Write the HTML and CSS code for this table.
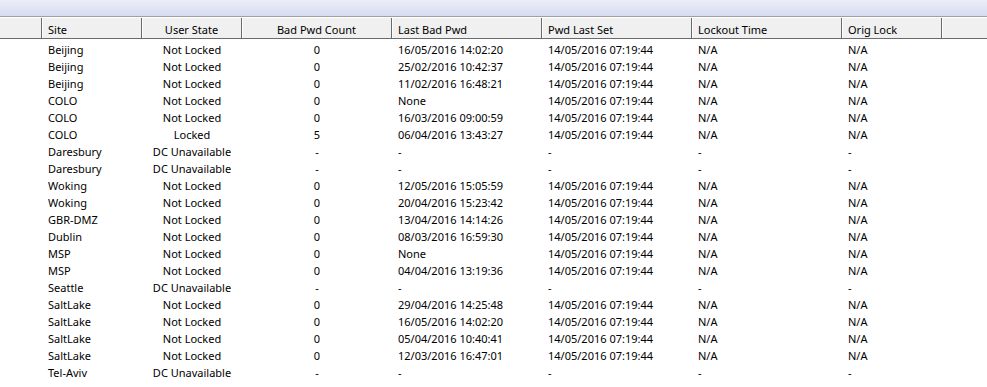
FILE: index.html
```html
<!DOCTYPE html>
<html>
<head>
<meta charset="utf-8">
<link rel="stylesheet" href="styles.css">
</head>
<body>
<div class="topbar"></div>
<div class="grid head">
  <div class="h"></div>
  <div class="h">Site</div>
  <div class="h c">User State</div>
  <div class="h c">Bad Pwd Count</div>
  <div class="h">Last Bad Pwd</div>
  <div class="h">Pwd Last Set</div>
  <div class="h">Lockout Time</div>
  <div class="h">Orig Lock</div>
  <div class="h"></div>
</div>
<div class="rows" id="rows">
  <div class="grid row"><span></span><span>Beijing</span><span class="c">Not Locked</span><span class="c">0</span><span>16/05/2016 14:02:20</span><span>14/05/2016 07:19:44</span><span>N/A</span><span>N/A</span></div>
  <div class="grid row"><span></span><span>Beijing</span><span class="c">Not Locked</span><span class="c">0</span><span>25/02/2016 10:42:37</span><span>14/05/2016 07:19:44</span><span>N/A</span><span>N/A</span></div>
  <div class="grid row"><span></span><span>Beijing</span><span class="c">Not Locked</span><span class="c">0</span><span>11/02/2016 16:48:21</span><span>14/05/2016 07:19:44</span><span>N/A</span><span>N/A</span></div>
  <div class="grid row"><span></span><span>COLO</span><span class="c">Not Locked</span><span class="c">0</span><span>None</span><span>14/05/2016 07:19:44</span><span>N/A</span><span>N/A</span></div>
  <div class="grid row"><span></span><span>COLO</span><span class="c">Not Locked</span><span class="c">0</span><span>16/03/2016 09:00:59</span><span>14/05/2016 07:19:44</span><span>N/A</span><span>N/A</span></div>
  <div class="grid row"><span></span><span>COLO</span><span class="c">Locked</span><span class="c">5</span><span>06/04/2016 13:43:27</span><span>14/05/2016 07:19:44</span><span>N/A</span><span>N/A</span></div>
  <div class="grid row"><span></span><span>Daresbury</span><span class="c">DC Unavailable</span><span class="c">-</span><span>-</span><span>-</span><span>-</span><span>-</span></div>
  <div class="grid row"><span></span><span>Daresbury</span><span class="c">DC Unavailable</span><span class="c">-</span><span>-</span><span>-</span><span>-</span><span>-</span></div>
  <div class="grid row"><span></span><span>Woking</span><span class="c">Not Locked</span><span class="c">0</span><span>12/05/2016 15:05:59</span><span>14/05/2016 07:19:44</span><span>N/A</span><span>N/A</span></div>
  <div class="grid row"><span></span><span>Woking</span><span class="c">Not Locked</span><span class="c">0</span><span>20/04/2016 15:23:42</span><span>14/05/2016 07:19:44</span><span>N/A</span><span>N/A</span></div>
  <div class="grid row"><span></span><span>GBR-DMZ</span><span class="c">Not Locked</span><span class="c">0</span><span>13/04/2016 14:14:26</span><span>14/05/2016 07:19:44</span><span>N/A</span><span>N/A</span></div>
  <div class="grid row"><span></span><span>Dublin</span><span class="c">Not Locked</span><span class="c">0</span><span>08/03/2016 16:59:30</span><span>14/05/2016 07:19:44</span><span>N/A</span><span>N/A</span></div>
  <div class="grid row"><span></span><span>MSP</span><span class="c">Not Locked</span><span class="c">0</span><span>None</span><span>14/05/2016 07:19:44</span><span>N/A</span><span>N/A</span></div>
  <div class="grid row"><span></span><span>MSP</span><span class="c">Not Locked</span><span class="c">0</span><span>04/04/2016 13:19:36</span><span>14/05/2016 07:19:44</span><span>N/A</span><span>N/A</span></div>
  <div class="grid row"><span></span><span>Seattle</span><span class="c">DC Unavailable</span><span class="c">-</span><span>-</span><span>-</span><span>-</span><span>-</span></div>
  <div class="grid row"><span></span><span>SaltLake</span><span class="c">Not Locked</span><span class="c">0</span><span>29/04/2016 14:25:48</span><span>14/05/2016 07:19:44</span><span>N/A</span><span>N/A</span></div>
  <div class="grid row"><span></span><span>SaltLake</span><span class="c">Not Locked</span><span class="c">0</span><span>16/05/2016 14:02:20</span><span>14/05/2016 07:19:44</span><span>N/A</span><span>N/A</span></div>
  <div class="grid row"><span></span><span>SaltLake</span><span class="c">Not Locked</span><span class="c">0</span><span>05/04/2016 10:40:41</span><span>14/05/2016 07:19:44</span><span>N/A</span><span>N/A</span></div>
  <div class="grid row"><span></span><span>SaltLake</span><span class="c">Not Locked</span><span class="c">0</span><span>12/03/2016 16:47:01</span><span>14/05/2016 07:19:44</span><span>N/A</span><span>N/A</span></div>
  <div class="grid row"><span></span><span>Tel-Aviv</span><span class="c">DC Unavailable</span><span class="c">-</span><span>-</span><span>-</span><span>-</span><span>-</span></div>
</div>
</body>
</html>
```
FILE: styles.css
```css
html, body {
  margin: 0;
  padding: 0;
  background: #ffffff;
  overflow: hidden;
}
body {
  font-family: "Noto Sans", "Open Sans", sans-serif;
  font-size: 11px;
  color: #000;
  width: 987px;
  height: 387px;
}
.topbar {
  height: 16px;
  background: linear-gradient(#eceef8, #d6dcef);
  border-bottom: 1px solid #a0a0a0;
}
.grid {
  display: grid;
  grid-template-columns: 42px 100px 100px 150px 150px 150px 150px 100px 1fr;
}
.head {
  border-top: 1px solid #ffffff;
  background: #f0f0f0;
  height: 20px;
  border-bottom: 1px solid #6b6b6b;
}
.h {
  border-right: 1px solid #6b6b6b;
  box-shadow: inset 1px 0 0 #ffffff;
  padding-left: 6px;
  padding-top: 1px;
  line-height: 21px;
  white-space: nowrap;
  overflow: hidden;
}
.h:first-child {
  box-shadow: none;
}
.h:last-child {
  border-right: none;
}
.h.c {
  text-align: center;
  padding-left: 0;
}
.rows {
  padding-top: 2px;
}
.row {
  height: 17px;
  line-height: 17px;
}
.row span {
  padding-left: 6px;
  white-space: nowrap;
  overflow: hidden;
}
.row span.c {
  text-align: center;
  padding-left: 0;
}
```
